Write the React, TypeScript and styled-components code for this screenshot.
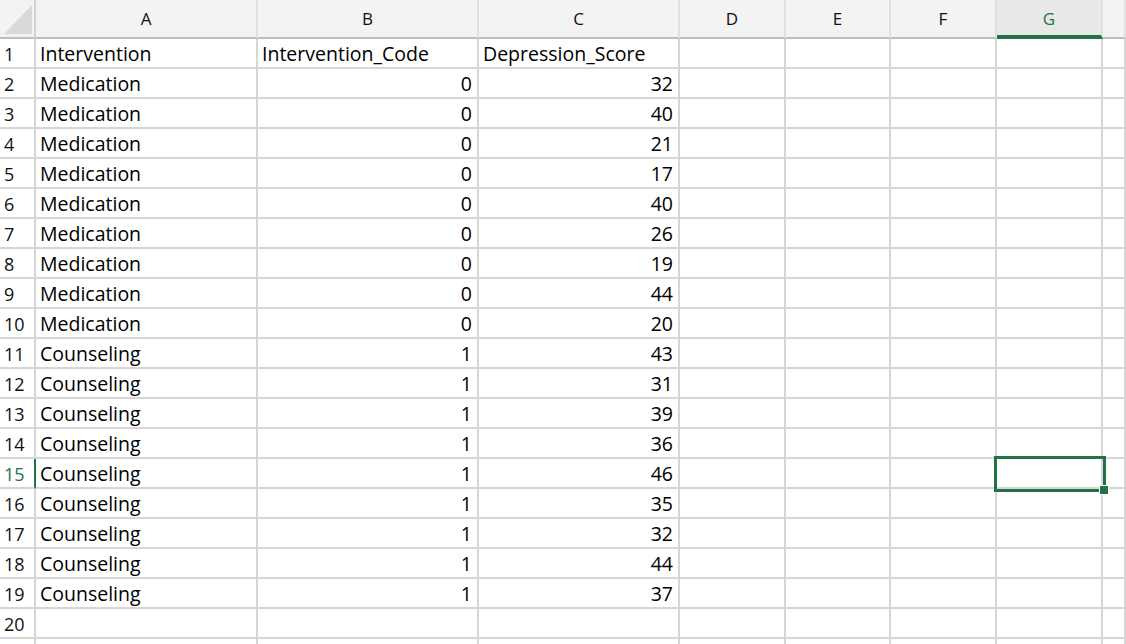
import styled, { createGlobalStyle } from 'styled-components'

const GlobalStyle = createGlobalStyle`
  html, body {
    margin: 0;
    padding: 0;
    background: #ffffff;
    overflow: hidden;
  }

  body {
    font-family: 'Open Sans', Lato, sans-serif;
  }
`

const GREEN = '#217346'
const LINE = '#d6d6d6'

const columns = ['A', 'B', 'C', 'D', 'E', 'F', 'G', '']
const emptyCols = ['D', 'E', 'F', 'G', 'H']
const selectedCol = 'G'
const selectedRow = 15

// last row is only a sliver at the bottom edge, so no label is drawn for it
const rows: [string, string, string][] = [
  ['Intervention', 'Intervention_Code', 'Depression_Score'],
  ['Medication', '0', '32'],
  ['Medication', '0', '40'],
  ['Medication', '0', '21'],
  ['Medication', '0', '17'],
  ['Medication', '0', '40'],
  ['Medication', '0', '26'],
  ['Medication', '0', '19'],
  ['Medication', '0', '44'],
  ['Medication', '0', '20'],
  ['Counseling', '1', '43'],
  ['Counseling', '1', '31'],
  ['Counseling', '1', '39'],
  ['Counseling', '1', '36'],
  ['Counseling', '1', '46'],
  ['Counseling', '1', '35'],
  ['Counseling', '1', '32'],
  ['Counseling', '1', '44'],
  ['Counseling', '1', '37'],
  ['', '', ''],
  ['', '', '']
]

const Sheet = styled.div`
  display: grid;
  grid-template-columns: 36px 222px 221px 201px 106px 105px 106px 106px 1fr;
  grid-auto-rows: 30px;
  grid-template-rows: 39px;
  height: 644px;
  overflow: hidden;
  position: relative;
  width: 1126px;
`

const Corner = styled.div`
  background-color: #f3f3f3;
  border-bottom: 2px solid #bdbdbd;
  border-right: 2px solid #d0d0d0;
  box-sizing: border-box;

  svg {
    display: block;
  }
`

const ColHead = styled.div<{ $active?: boolean }>`
  align-items: center;
  background-color: ${(p) => (p.$active ? '#e8e8e8' : '#f3f3f3')};
  border-bottom: ${(p) => (p.$active ? `4px solid ${GREEN}` : '2px solid #bdbdbd')};
  border-right: 2px solid #e0e0e0;
  box-sizing: border-box;
  color: ${(p) => (p.$active ? GREEN : '#111111')};
  display: flex;
  font-size: 17px;
  justify-content: center;
  padding-top: ${(p) => (p.$active ? '2px' : '0')};
`

const RowHead = styled.div<{ $active?: boolean }>`
  align-items: center;
  background-color: #ffffff;
  border-bottom: 2px solid ${LINE};
  border-right: 2px solid ${(p) => (p.$active ? GREEN : LINE)};
  box-sizing: border-box;
  color: ${(p) => (p.$active ? GREEN : '#111111')};
  display: flex;
  font-size: 18px;
  padding-left: 4px;
  padding-top: 1px;
  white-space: nowrap;
`

const Cell = styled.div<{ $num?: boolean }>`
  align-items: center;
  border-bottom: 2px solid ${LINE};
  border-right: 2px solid ${LINE};
  box-sizing: border-box;
  color: #000000;
  display: flex;
  font-size: 19.5px;
  justify-content: ${(p) => (p.$num ? 'flex-end' : 'flex-start')};
  overflow: hidden;
  padding: 1px 5px 0 4px;
  white-space: nowrap;
`

const Selection = styled.div`
  border: 3px solid ${GREEN};
  box-sizing: border-box;
  height: 36px;
  left: 994px;
  pointer-events: none;
  position: absolute;
  top: 456px;
  width: 112px;
`

const FillHandle = styled.div`
  background-color: ${GREEN};
  border: 1px solid #ffffff;
  bottom: -6px;
  height: 8px;
  position: absolute;
  right: -6px;
  width: 8px;
`

export default function App() {
  return (
    <>
      <GlobalStyle />
      <Sheet>
        <Corner>
          <svg width="34" height="37" viewBox="0 0 34 37">
            <polygon points="4,34 32,34 32,5" fill="#d9d9d9" />
          </svg>
        </Corner>
        {columns.map((c, i) => (
          <ColHead key={i} $active={c === selectedCol}>
            {c}
          </ColHead>
        ))}

        {rows.map((r, i) => {
          const n = i + 1
          return [
            <RowHead key={`h${n}`} $active={n === selectedRow}>
              {n < rows.length ? n : ''}
            </RowHead>,
            <Cell key={`a${n}`}>{r[0]}</Cell>,
            <Cell key={`b${n}`} $num={n > 1}>
              {r[1]}
            </Cell>,
            <Cell key={`c${n}`} $num={n > 1}>
              {r[2]}
            </Cell>,
            ...emptyCols.map((c) => <Cell key={`${c}${n}`} />)
          ]
        })}

        <Selection>
          <FillHandle />
        </Selection>
      </Sheet>
    </>
  )
}
